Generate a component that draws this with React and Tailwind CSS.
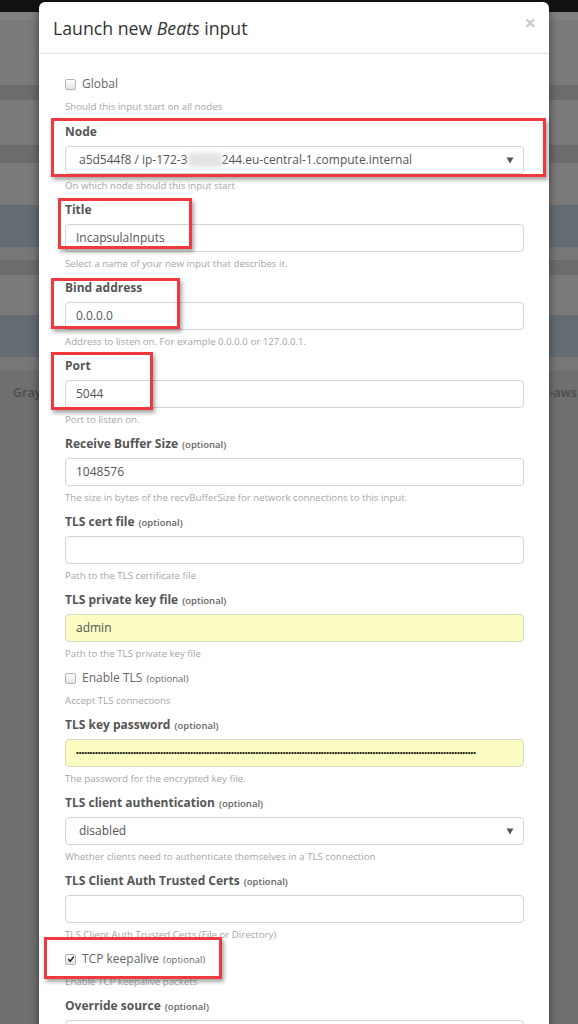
import React from 'react';

// Dimmed page behind the modal: stacked bands of the Graylog inputs list
const bands = [
  { h: 'h-[12px]', bg: 'bg-[#121212]' },
  { h: 'h-[8px]', bg: 'bg-[#808080]' },
  { h: 'h-[65px]', bg: 'bg-[#7a7a7a]' },
  { h: 'h-[15px]', bg: 'bg-[#6c6c6c]' },
  { h: 'h-[45px]', bg: 'bg-[#7a7a7a]' },
  { h: 'h-[18px]', bg: 'bg-[#6c6c6c]' },
  { h: 'h-[42px]', bg: 'bg-[#7a7a7a]' },
  { h: 'h-[42px]', bg: 'bg-[#646c73]' },
  { h: 'h-[13px]', bg: 'bg-[#777777]' },
  { h: 'h-[15px]', bg: 'bg-[#6c6c6c]' },
  { h: 'h-[40px]', bg: 'bg-[#7a7a7a]' },
  { h: 'h-[42px]', bg: 'bg-[#646c73]' },
  { h: 'h-[13px]', bg: 'bg-[#777777]' },
];

const Checkbox = ({ checked }) => (
  <span className="w-[11px] h-[11px] rounded-[2px] border border-[#b3b3b3] bg-gradient-to-b from-white to-[#e4e4e4] flex items-center justify-center shrink-0">
    {checked && (
      <svg width="8" height="8" viewBox="0 0 10 10">
        <path d="M1.5 5.2 L4 7.8 L8.6 1.8" fill="none" stroke="#333" strokeWidth="2" />
      </svg>
    )}
  </span>
);

const Optional = ({ bold }) => (
  <span className={`text-[9.5px] ml-[4px] text-[#666] ${bold ? 'font-semibold' : 'font-normal'}`}>(optional)</span>
);

const Help = ({ children, className = '' }) => (
  <div className={`h-[14px] leading-[14px] text-[9.7px] text-[#a6a6a6] whitespace-nowrap ${className}`}>{children}</div>
);

const Field = ({ label, optional, help, children }) => (
  <div className="mb-[8px]">
    <div className="h-[18px] leading-[18px] mb-[5px] text-[12px] font-bold text-[#555] whitespace-nowrap">
      {label}
      {optional && <Optional bold />}
    </div>
    {children}
    <Help className="mt-[5px]">{help}</Help>
  </div>
);

const TextBox = ({ value, yellow, children }) => (
  <div
    className={`h-[28px] rounded-[4px] border flex items-center pl-[10px] text-[12px] text-[#555] whitespace-nowrap overflow-hidden ${
      yellow ? 'bg-[#fafcc2] border-[#d9d9c4] text-[#333]' : 'bg-white border-[#d4d4d4]'
    }`}
  >
    {children ?? value}
  </div>
);

const SelectBox = ({ children }) => (
  <div className="h-[28px] rounded-[4px] border border-[#d4d4d4] bg-white flex items-center justify-between pl-[13px] pr-[9px] text-[12px] text-[#555] whitespace-nowrap">
    <span className="flex items-center">{children}</span>
    <svg width="8" height="7" viewBox="0 0 8 7">
      <path d="M0.5 0.5 H7.5 L4 6.5 Z" fill="#555" />
    </svg>
  </div>
);

const CheckField = ({ label, optional, checked, help }) => (
  <div className="mb-[8px]">
    <div className="h-[18px] flex items-center gap-[6px] text-[12px] text-[#666] whitespace-nowrap">
      <Checkbox checked={checked} />
      <span>
        {label}
        {optional && <Optional />}
      </span>
    </div>
    <Help className="mt-[7px]">{help}</Help>
  </div>
);

const Highlight = ({ className }) => (
  <div className={`absolute border-[3px] border-[#ee3a3f] shadow-[2px_3px_4px_rgba(0,0,0,0.35)] ${className}`} />
);

const App = () => {
  const dots = '•'.repeat(147);

  return (
    <div className="relative w-[578px] h-[1024px] overflow-hidden bg-[#6f6f6f] font-['Open_Sans',sans-serif]">
      {/* backdrop page */}
      <div className="flex flex-col">
        {bands.map((b, i) => (
          <div key={i} className={`${b.h} ${b.bg}`} />
        ))}
        <div className="h-[46px] flex items-center justify-between pl-[13px] pr-[1px] text-[12.5px] font-semibold text-[#4c4c4c] whitespace-nowrap">
          <span>Graylog</span>
          <span>57-aws</span>
        </div>
      </div>

      {/* modal */}
      <div className="absolute left-[39px] top-[2px] w-[510px] bg-white rounded-[6px] shadow-[0_3px_9px_rgba(0,0,0,0.5)]">
        <div className="h-[52px] border-b border-[#e5e5e5] flex items-center justify-between pl-[14px] pr-[13px]">
          <h4 className="text-[17.7px] leading-[24px] text-[#333] whitespace-nowrap">
            Launch new <em>Beats</em> input
          </h4>
          <span className="-mt-[9px] text-[20px] font-bold leading-none text-[#c9c9c9]">×</span>
        </div>

        <div className="pl-[26px] pr-[25px] pt-[21px]">
          <div className="mb-[9px]">
            <div className="h-[18px] flex items-center gap-[6px] text-[12px] text-[#666]">
              <Checkbox />
              <span>Global</span>
            </div>
            <Help className="mt-[7px]">Should this input start on all nodes</Help>
          </div>

          <Field label="Node" help="On which node should this input start">
            <SelectBox>
              <span>a5d544f8 / ip-172-3</span>
              {/* redacted part of the host name */}
              <span className="w-[34px] h-[14px] bg-[#e4e4e4] blur-[2px]" />
              <span>244.eu-central-1.compute.internal</span>
            </SelectBox>
          </Field>

          <Field label="Title" help="Select a name of your new input that describes it.">
            <TextBox value="IncapsulaInputs" />
          </Field>

          <Field label="Bind address" help="Address to listen on. For example 0.0.0.0 or 127.0.0.1.">
            <TextBox value="0.0.0.0" />
          </Field>

          <Field label="Port" help="Port to listen on.">
            <TextBox value="5044" />
          </Field>

          <Field
            label="Receive Buffer Size"
            optional
            help="The size in bytes of the recvBufferSize for network connections to this input."
          >
            <TextBox value="1048576" />
          </Field>

          <Field label="TLS cert file" optional help="Path to the TLS certificate file">
            <TextBox value="" />
          </Field>

          <Field label="TLS private key file" optional help="Path to the TLS private key file">
            <TextBox value="admin" yellow />
          </Field>

          <CheckField label="Enable TLS" optional help="Accept TLS connections" />

          <Field label="TLS key password" optional help="The password for the encrypted key file.">
            <TextBox yellow>
              <span className="font-['Liberation_Sans',sans-serif] text-[8px] tracking-[-0.08px] leading-none text-[#111]">{dots}</span>
            </TextBox>
          </Field>

          <Field
            label="TLS client authentication"
            optional
            help="Whether clients need to authenticate themselves in a TLS connection"
          >
            <SelectBox>disabled</SelectBox>
          </Field>

          <Field
            label="TLS Client Auth Trusted Certs"
            optional
            help="TLS Client Auth Trusted Certs (File or Directory)"
          >
            <TextBox value="" />
          </Field>

          <CheckField label="TCP keepalive" optional checked help="Enable TCP keepalive packets" />

          <Field label="Override source" optional help="The source is a hostname derived from the received packet by default.">
            <TextBox value="" />
          </Field>
        </div>
      </div>

      {/* red annotation boxes */}
      <Highlight className="left-[51px] top-[118px] w-[495px] h-[59px]" />
      <Highlight className="left-[58px] top-[198px] w-[134px] h-[51px]" />
      <Highlight className="left-[51px] top-[278px] w-[129px] h-[51px]" />
      <Highlight className="left-[51px] top-[352px] w-[102px] h-[58px]" />
      <Highlight className="left-[44px] top-[937px] w-[178px] h-[42px]" />
    </div>
  );
};

export default App;
